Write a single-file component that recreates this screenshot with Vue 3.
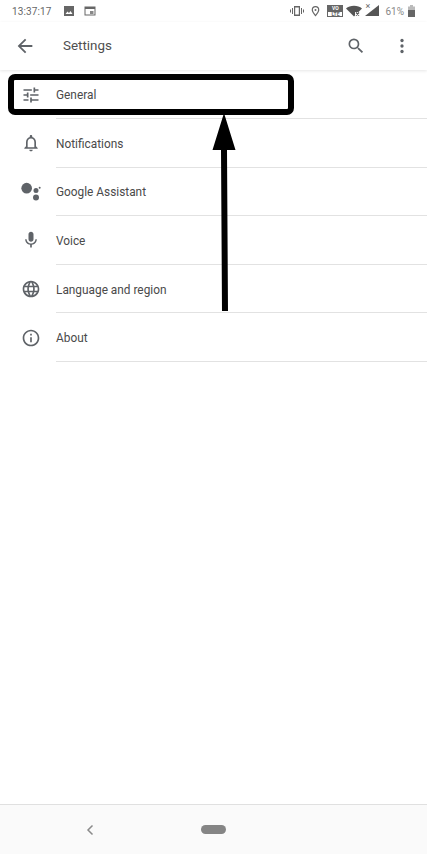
<template>
  <div class="screen">
    <div class="status-bar">
      <span class="time">13:37:17</span>
      <svg class="st-icon" viewBox="0 0 12 12" width="12" height="12">
        <path fill="#666" d="M1 1h10v10H1z" />
        <path fill="#fff" d="M2.500 9l2-2.500 1.500 1.500 1.500-2 2 3z" />
      </svg>
      <svg class="st-icon" viewBox="0 0 12 12" width="12" height="12">
        <path fill="#666" d="M.5 1.500h11v9H.5z" />
        <path fill="#fff" d="M1.500 4h9v5.500h-9z" />
        <path fill="#888" d="M6 6h3.500v3H6z" />
      </svg>
      <div class="status-right">
        <svg viewBox="0 0 16 12" width="16" height="12">
          <path fill="#666" d="M5 1h6v10H5z" />
          <path fill="#fff" d="M6.200 2.500h3.600v7H6.200z" />
          <path fill="#666" d="M3 3h1v6H3zM12 3h1v6h-1zM1 4.500h1v3H1zM14 4.500h1v3h-1z" />
        </svg>
        <svg class="pin" viewBox="0 0 12 12" width="11" height="12">
          <path fill="none" stroke="#666" stroke-width="1.300" d="M6 11C4 8.500 2.500 6.800 2.500 4.800a3.500 3.500 0 0 1 7 0C9.500 6.800 8 8.500 6 11z" />
          <circle cx="6" cy="4.800" r="1.100" fill="#666" />
        </svg>
        <div class="volte">
          <span class="volte-top">VO</span>
          <span class="volte-bottom">LTE</span>
        </div>
        <svg class="wifi" viewBox="0 0 16 12" width="16" height="12">
          <path fill="#555" d="M0 3.500C2 1.800 4.800.800 8 .800s6 1 8 2.700L8 11.500z" />
          <path fill="#fff" d="M9 7h6v5H9z" />
          <path stroke="#555" stroke-width="1.200" d="M10 7.500l3 3M13 7.500l-3 3" />
        </svg>
        <div class="signal">
          <span class="signal-x">×</span>
          <svg viewBox="0 0 14 12" width="14" height="12">
            <path fill="#555" d="M14 1v11H0z" />
          </svg>
        </div>
        <span class="battery-text">61%</span>
        <svg class="battery" viewBox="0 0 7 12" width="7" height="12">
          <path fill="#bbb" d="M2 0h3v1.500h2V12H0V1.500h2z" />
          <path fill="#666" d="M0 5h7v7H0z" />
        </svg>
      </div>
    </div>

    <header class="app-bar">
      <svg class="back" viewBox="0 0 24 24" width="24" height="24">
        <path fill="#5f6368" d="M20 11H7.830l5.590-5.590L12 4l-8 8 8 8 1.410-1.410L7.830 13H20v-2z" />
      </svg>
      <h1 class="title">Settings</h1>
      <div class="actions">
        <svg viewBox="0 0 24 24" width="24" height="24">
          <path fill="#5f6368" d="M15.500 14h-.79l-.28-.27A6.470 6.470 0 0 0 16 9.500 6.500 6.500 0 1 0 9.500 16c1.610 0 3.090-.59 4.230-1.570l.27.28v.79l5 4.990L20.490 19l-4.990-5zm-6 0C7.010 14 5 11.990 5 9.500S7.010 5 9.500 5 14 7.010 14 9.500 11.990 14 9.500 14z" />
        </svg>
        <svg viewBox="0 0 24 24" width="24" height="24">
          <circle cx="12" cy="5.400" r="2" fill="#5f6368" />
          <circle cx="12" cy="12" r="2" fill="#5f6368" />
          <circle cx="12" cy="18.600" r="2" fill="#5f6368" />
        </svg>
      </div>
    </header>

    <main class="list">
      <div v-for="item in items" :key="item.label" class="row">
        <div class="row-icon">
          <svg viewBox="0 0 24 24" width="24" height="24">
            <path v-for="(d, i) in item.paths" :key="i" fill="#5f6368" fill-rule="evenodd" :d="d" />
          </svg>
        </div>
        <div class="row-label">{{ item.label }}</div>
      </div>
    </main>

    <nav class="nav-bar">
      <svg class="nav-back" viewBox="0 0 8 12" width="8" height="12">
        <path fill="none" stroke="#8a8a8a" stroke-width="1.500" d="M6.500 1.500L2 6l4.500 4.500" />
      </svg>
      <div class="nav-home"></div>
    </nav>

    <div class="callout"></div>
    <svg class="arrow" viewBox="0 0 26 200" width="26" height="200">
      <path fill="#000" d="M13 0L24.500 37H16L17 198H11L10 37H1.500z" />
    </svg>
  </div>
</template>

<script setup>
const items = [
  {
    label: "General",
    paths: ["M3 17v2h6v-2H3zM3 5v2h10V5H3zm10 16v-2h8v-2h-8v-2h-2v6h2zM7 9v2H3v2h4v2h2V9H7zm14 4v-2H11v2h10zm-6-4h2V7h4V5h-4V3h-2v6z"],
  },
  {
    label: "Notifications",
    paths: ["M12 22c1.100 0 2-.9 2-2h-4c0 1.100.9 2 2 2zm6-6v-5c0-3.070-1.630-5.640-4.500-6.320V4c0-.83-.67-1.500-1.500-1.500s-1.500.67-1.500 1.500v.68C7.640 5.360 6 7.920 6 11v5l-2 2v1h16v-1l-2-2zm-2 1H8v-6c0-2.480 1.510-4.500 4-4.500s4 2.020 4 4.500v6z"],
  },
  {
    label: "Google Assistant",
    paths: [
      "M6.800 1a6.400 6.400 0 1 0 0 12.800a6.400 6.400 0 1 0 0-12.800z",
      "M18 7.200a3 3 0 1 0 0 6a3 3 0 1 0 0-6z",
      "M18 15a3.600 3.600 0 1 0 0 7.200a3.600 3.600 0 1 0 0-7.200z",
      "M22.400 5.800a1.200 1.200 0 1 0 0 2.400a1.200 1.200 0 1 0 0-2.400z",
    ],
  },
  {
    label: "Voice",
    paths: ["M12 14c1.660 0 3-1.340 3-3V5c0-1.660-1.340-3-3-3S9 3.340 9 5v6c0 1.660 1.340 3 3 3zM17.300 11c0 3-2.540 5.100-5.300 5.100S6.700 14 6.700 11H5c0 3.410 2.720 6.230 6 6.720V21h2v-3.280c3.280-.48 6-3.300 6-6.720h-1.700z"],
  },
  {
    label: "Language and region",
    paths: ["M11.990 2C6.470 2 2 6.480 2 12s4.470 10 9.990 10C17.520 22 22 17.520 22 12S17.520 2 11.990 2zm6.930 6h-2.950a15.650 15.650 0 0 0-1.380-3.560A8.030 8.030 0 0 1 18.920 8zM12 4.040c.83 1.200 1.480 2.530 1.910 3.960h-3.820c.43-1.430 1.080-2.760 1.910-3.960zM4.260 14C4.100 13.360 4 12.690 4 12s.1-1.360.26-2h3.380c-.08.660-.14 1.320-.14 2s.06 1.340.14 2H4.260zm.82 2h2.950c.32 1.250.78 2.450 1.380 3.560A7.987 7.987 0 0 1 5.080 16zm2.950-8H5.080a7.987 7.987 0 0 1 4.330-3.560A15.650 15.650 0 0 0 8.030 8zM12 19.960c-.83-1.200-1.480-2.530-1.910-3.960h3.820c-.43 1.430-1.080 2.760-1.910 3.960zM14.340 14H9.660c-.09-.66-.16-1.320-.16-2s.07-1.350.16-2h4.680c.09.650.16 1.320.16 2s-.07 1.340-.16 2zm.25 5.560c.6-1.110 1.060-2.310 1.380-3.560h2.950a8.030 8.030 0 0 1-4.330 3.560zM16.360 14c.08-.66.14-1.320.14-2s-.06-1.340-.14-2h3.380c.16.640.26 1.310.26 2s-.1 1.360-.26 2h-3.380z"],
  },
  {
    label: "About",
    paths: ["M11 7h2v2h-2zm0 4h2v6h-2zm1-9C6.480 2 2 6.480 2 12s4.480 10 10 10 10-4.480 10-10S17.520 2 12 2zm0 18c-4.410 0-8-3.590-8-8s3.590-8 8-8 8 3.590 8 8-3.590 8-8 8z"],
  },
];
</script>

<style>
html,
body {
  margin: 0;
  background: #fff;
}
</style>

<style scoped>
.screen {
  position: relative;
  width: 427px;
  height: 854px;
  overflow: hidden;
  display: flex;
  flex-direction: column;
  background: #fff;
  font-family: Roboto, "Liberation Sans", sans-serif;
}

.status-bar {
  height: 22px;
  padding: 0 12px;
  display: flex;
  align-items: center;
  gap: 9px;
  color: #666;
  font-size: 10px;
  flex: none;
}

.time {
  margin-right: 3px;
  letter-spacing: 0.1px;
}

.status-right {
  margin-left: auto;
  display: flex;
  align-items: center;
}

.pin {
  margin-left: 5px;
}

.volte {
  width: 16px;
  margin-left: 6px;
  display: flex;
  flex-direction: column;
  font-size: 5px;
  line-height: 6px;
  text-align: center;
  font-weight: 700;
}

.volte-top {
  background: #666;
  color: #fff;
}

.volte-bottom {
  border: 1px solid #666;
  line-height: 4px;
}

.wifi {
  margin-left: 3px;
}

.signal {
  position: relative;
  margin-left: 3px;
}

.signal-x {
  position: absolute;
  left: 0;
  top: -2px;
  font-size: 9px;
  line-height: 9px;
}

.battery-text {
  margin-left: 6px;
  color: #888;
}

.battery {
  margin-left: 4px;
}

.app-bar {
  height: 48px;
  display: flex;
  align-items: center;
  padding: 0 15px 0 14px;
  flex: none;
  box-shadow: 0 1px 3px rgba(0, 0, 0, 0.1);
}

.back {
  width: 22px;
  height: 22px;
}

.title {
  margin: -2px 0 0 27px;
  font-size: 13.4px;
  font-weight: 400;
  color: #4f4f4f;
}

.actions {
  margin-left: auto;
  display: flex;
  gap: 26px;
}

.actions svg {
  width: 20px;
  height: 20px;
}

.list {
  flex: 1;
  padding-top: 0.4px;
}

.row {
  height: 48.6px;
  display: flex;
  align-items: stretch;
}

.row-icon {
  width: 56px;
  flex: none;
  display: flex;
  align-items: center;
  padding-left: 21px;
  box-sizing: border-box;
}

.row-icon svg {
  width: 20px;
  height: 20px;
}

.row-label {
  flex: 1;
  display: flex;
  align-items: center;
  padding-top: 2px;
  font-size: 11.85px;
  color: #4a4a4a;
  border-bottom: 1px solid #e2e2e2;
}

.nav-bar {
  position: relative;
  height: 49px;
  flex: none;
  display: flex;
  align-items: center;
  justify-content: center;
  background: #fafafa;
  border-top: 1px solid #e0e0e0;
}

.nav-back {
  position: absolute;
  left: 86px;
}

.nav-home {
  width: 25px;
  height: 9px;
  border-radius: 5px;
  background: #858585;
}

.callout {
  position: absolute;
  left: 8px;
  top: 74px;
  width: 286px;
  height: 41px;
  box-sizing: border-box;
  border: 6px solid #000;
  border-radius: 7px;
}

.arrow {
  position: absolute;
  left: 211px;
  top: 113px;
}
</style>
